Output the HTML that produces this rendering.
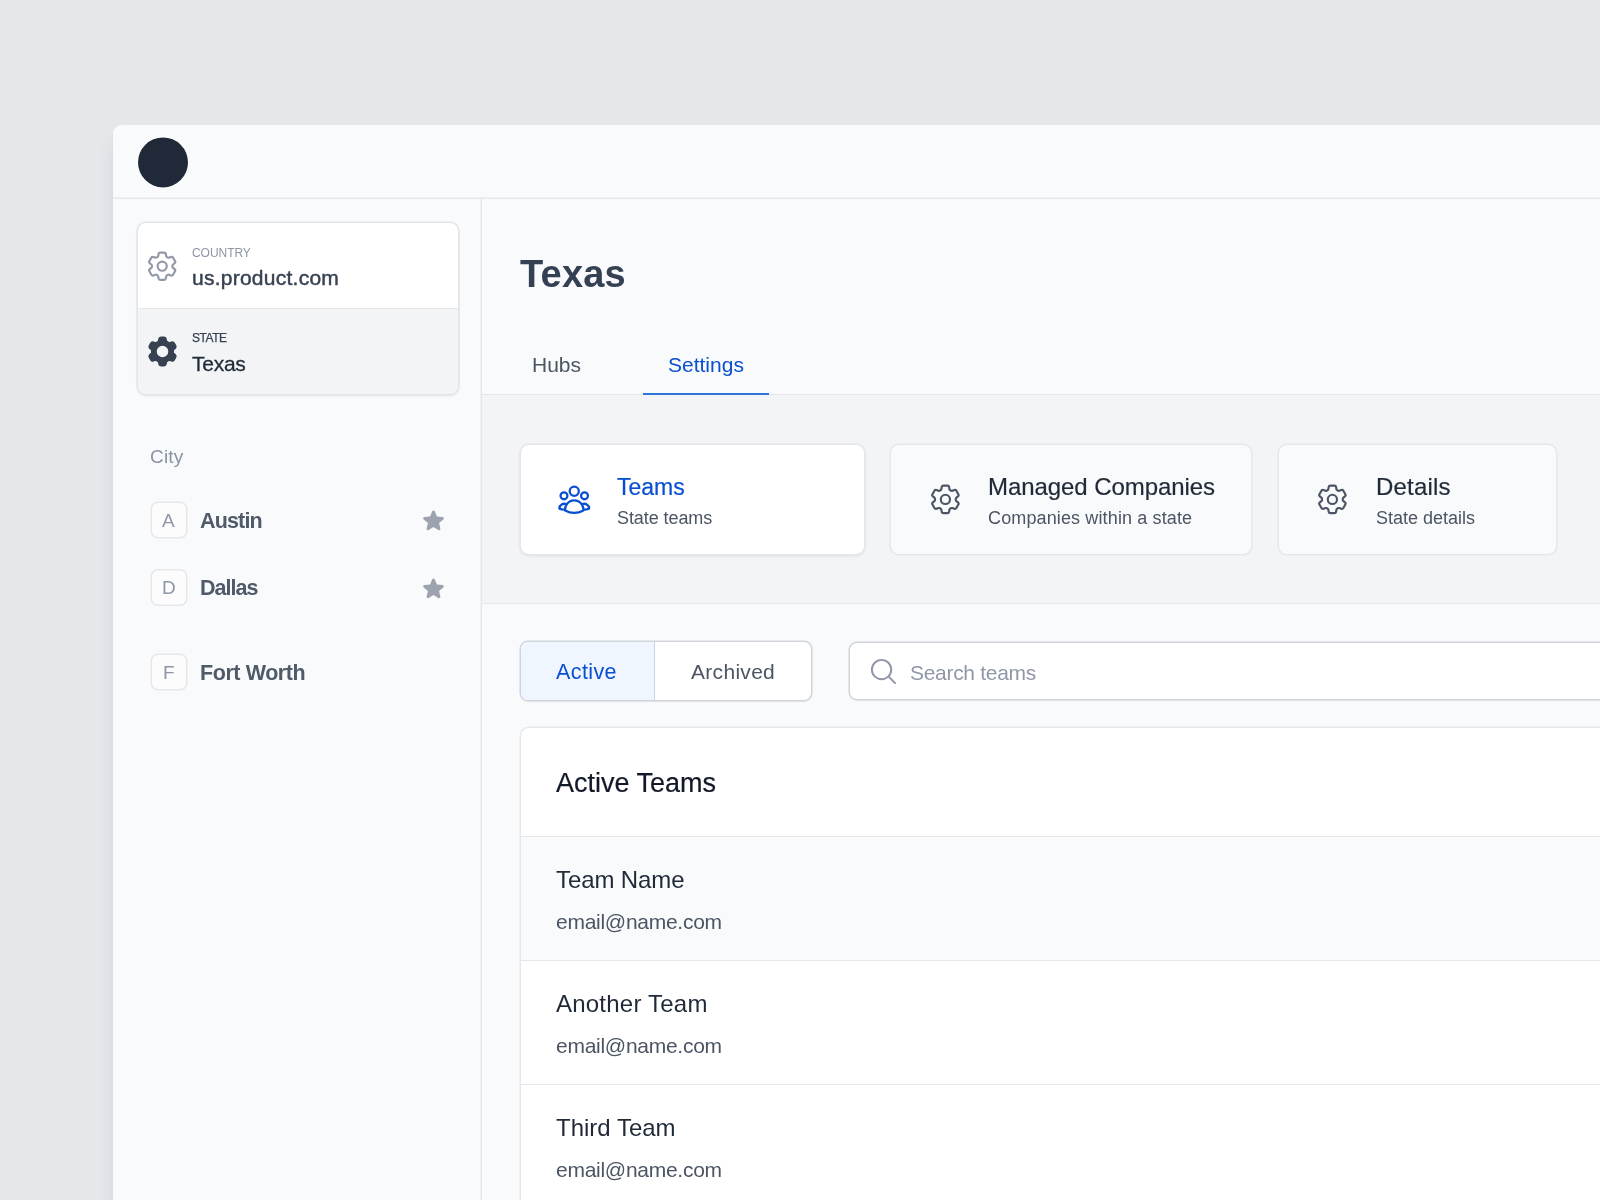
<!DOCTYPE html>
<html lang="en">
<head>
<meta charset="utf-8">
<title>Texas – Settings</title>
<style>
*{box-sizing:border-box;margin:0;padding:0}
html,body{width:1600px;height:1200px;overflow:hidden}
body{background:#e5e7eb;font-family:"Liberation Sans",Arial,sans-serif;position:relative;color:#1f2937}
.abs{position:absolute}
.t{will-change:transform;position:absolute;white-space:nowrap;line-height:1;transform-origin:0 50%}
#win{left:113px;top:125px;width:1500px;height:1100px;background:#f9fafb;border-radius:9px 0 0 0;box-shadow:0 15px 22px -4px rgba(17,24,39,.10),0 6px 9px -3px rgba(17,24,39,.05)}
#hdr{left:113px;top:197px;width:1487px;height:2px;background:linear-gradient(to bottom,rgba(229,231,235,.5) 0,rgba(229,231,235,.5) 1px,#e5e7eb 1px,#e5e7eb 2px)}
#logo{left:138px;top:137px;width:50px;height:50px;border-radius:50%;background:#1f2937;box-shadow:0 0 0 1px rgba(255,255,255,.85);transform:translateY(.4px)}
#sideline{left:480px;top:199px;width:2px;height:1001px;background:linear-gradient(to right,rgba(229,231,235,.5) 0,rgba(229,231,235,.5) 1px,#e5e7eb 1px,#e5e7eb 2px)}
#ctx{left:137px;top:222px;width:322px;height:173px;border-radius:9px;background:#fff;border:1px solid #e2e4e9;box-shadow:0 0 0 .5px #e2e4e9,0 1px 3px rgba(17,24,39,.08);overflow:hidden}
#ctx .lo{position:absolute;left:0;top:85px;width:100%;height:88px;background:#f3f4f6;border-top:1px solid #e5e7eb}
svg{position:absolute;overflow:visible}
.badge{position:absolute;width:36px;height:36px;border:1px solid #e5e7eb;border-radius:7px;background:#fcfcfd;box-shadow:0 0 0 .5px #e5e7eb}
#band{left:482px;top:394px;width:1118px;height:210px;background:#f3f4f6;border-top:1px solid #e5e7eb;border-bottom:1px solid #e5e7eb}
.card{position:absolute;top:444px;height:111px;border:1px solid #e5e7eb;border-radius:9px;background:#f9fafb;box-shadow:0 0 0 .5px #e5e7eb}
#c1{left:520px;width:345px;background:#fff;box-shadow:0 0 0 .5px #e5e7eb,0 1px 3px rgba(17,24,39,.10)}
#c2{left:890px;width:362px}
#c3{left:1278px;width:279px}
#seg{left:520px;top:641px;width:292px;height:60px;border:1px solid #d1d5db;border-radius:8px;background:#fff;overflow:hidden;box-shadow:0 0 0 .5px #d1d5db,0 1px 2px rgba(17,24,39,.05)}
#seg .on{position:absolute;left:0;top:0;width:134px;height:100%;background:#eff6ff;border-right:1px solid #d1d5db}
#search{left:849px;top:642px;width:800px;height:58px;border:1px solid #d1d5db;border-radius:8px;background:#fff;box-shadow:0 0 0 .5px #d1d5db,0 1px 2px rgba(17,24,39,.05)}
#tbl{left:520px;top:727px;width:1200px;height:600px;border:1px solid #e5e7eb;border-radius:9px 0 0 0;background:#fff;overflow:hidden;box-shadow:0 0 0 .5px #e5e7eb}
#tbl .r{position:absolute;left:0;width:100%;height:1px;background:#e5e7eb}
#tbl .alt{position:absolute;left:0;top:109px;width:100%;height:124px;background:#f9fafb}
</style>
</head>
<body>
<div id="win" class="abs"></div>
<div id="hdr" class="abs"></div>
<div id="logo" class="abs"></div>
<div id="sideline" class="abs"></div>

<!-- context switcher -->
<div id="ctx" class="abs"><div class="lo"></div></div>
<svg style="left:144.3px;top:247.7px" width="36.4" height="36.4" viewBox="0 0 24 24" fill="none" stroke="#9299a8" stroke-width="1.45" stroke-linecap="round" stroke-linejoin="round"><path d="M9.594 3.94c.09-.542.56-.94 1.11-.94h2.593c.55 0 1.02.398 1.11.94l.213 1.281c.063.374.313.686.645.87.074.04.147.083.22.127.325.196.72.257 1.075.124l1.217-.456a1.125 1.125 0 0 1 1.37.49l1.296 2.247a1.125 1.125 0 0 1-.26 1.431l-1.003.827c-.293.241-.438.613-.43.992a7.723 7.723 0 0 1 0 .255c-.008.378.137.75.43.991l1.004.827c.424.35.534.955.26 1.43l-1.298 2.247a1.125 1.125 0 0 1-1.369.491l-1.217-.456c-.355-.133-.75-.072-1.076.124a6.47 6.47 0 0 1-.22.128c-.331.183-.581.495-.644.869l-.213 1.281c-.09.543-.56.94-1.11.94h-2.594c-.55 0-1.019-.398-1.11-.94l-.213-1.281c-.062-.374-.312-.686-.644-.87a6.52 6.52 0 0 1-.22-.127c-.325-.196-.72-.257-1.076-.124l-1.217.456a1.125 1.125 0 0 1-1.369-.49l-1.297-2.247a1.125 1.125 0 0 1 .26-1.431l1.004-.827c.292-.24.437-.613.43-.991a6.932 6.932 0 0 1 0-.255c.007-.38-.138-.751-.43-.992l-1.004-.827a1.125 1.125 0 0 1-.26-1.43l1.297-2.247a1.125 1.125 0 0 1 1.37-.491l1.216.456c.356.133.751.072 1.076-.124.072-.044.146-.086.22-.128.332-.183.582-.495.644-.869l.214-1.28Z"/><path d="M15 12a3 3 0 1 1-6 0 3 3 0 0 1 6 0Z"/></svg>
<span class="t" style="left:192px;top:246.5px;font-size:12px;color:#8d96a4;letter-spacing:-.05px">COUNTRY</span>
<span class="t" id="usp" style="left:192px;top:267px;font-size:21px;color:#374151;letter-spacing:.25px;-webkit-text-stroke:.45px #374151">us.product.com</span>
<svg style="left:144px;top:332.5px" width="37" height="37" viewBox="0 0 24 24" fill="#374151"><path fill-rule="evenodd" clip-rule="evenodd" d="M11.078 2.25c-.917 0-1.699.663-1.85 1.567L9.05 4.889c-.02.12-.115.26-.297.348a7.493 7.493 0 0 0-.986.57c-.166.115-.334.126-.45.083L6.3 5.508a1.875 1.875 0 0 0-2.282.819l-.922 1.597a1.875 1.875 0 0 0 .432 2.385l.84.692c.095.078.17.229.154.43a7.598 7.598 0 0 0 0 1.139c.015.2-.059.352-.153.43l-.841.692a1.875 1.875 0 0 0-.432 2.385l.922 1.597a1.875 1.875 0 0 0 2.282.818l1.019-.382c.115-.043.283-.031.45.082.312.214.641.405.985.57.182.088.277.228.297.35l.178 1.071c.151.904.933 1.567 1.85 1.567h1.844c.916 0 1.699-.663 1.85-1.567l.178-1.072c.02-.12.114-.26.297-.349.344-.165.673-.356.985-.57.167-.114.335-.125.45-.082l1.02.382a1.875 1.875 0 0 0 2.28-.819l.923-1.597a1.875 1.875 0 0 0-.432-2.385l-.84-.692c-.095-.078-.17-.229-.154-.43a7.614 7.614 0 0 0 0-1.139c-.016-.2.059-.352.153-.43l.84-.692c.708-.582.891-1.59.433-2.385l-.922-1.597a1.875 1.875 0 0 0-2.282-.818l-1.02.382c-.114.043-.282.031-.449-.083a7.49 7.49 0 0 0-.985-.57c-.183-.087-.277-.227-.297-.348l-.179-1.072a1.875 1.875 0 0 0-1.85-1.567h-1.843ZM12 15.75a3.75 3.75 0 1 0 0-7.5 3.75 3.75 0 0 0 0 7.5Z"/></svg>
<span class="t" style="left:192px;top:332.4px;font-size:12px;color:#374151;letter-spacing:-.45px;-webkit-text-stroke:.25px #374151">STATE</span>
<span class="t" style="left:192px;top:353px;font-size:21px;color:#1f2937;letter-spacing:-.25px;-webkit-text-stroke:.3px #1f2937">Texas</span>

<!-- city list -->
<span class="t" style="left:150px;top:446.5px;font-size:19px;color:#8a93a2;letter-spacing:.2px">City</span>
<div class="badge" style="left:151px;top:502px"></div>
<span class="t" style="left:162.2px;top:511px;font-size:19px;color:#8e96a6">A</span>
<span class="t" style="left:200px;top:511px;font-size:21.5px;letter-spacing:-.85px;color:#505a69;font-weight:bold">Austin</span>
<svg style="left:420.5px;top:507.5px" width="25" height="25" viewBox="0 0 24 24" fill="#9ca3af"><path fill-rule="evenodd" clip-rule="evenodd" d="M10.788 3.21c.448-1.077 1.976-1.077 2.424 0l2.082 5.006 5.404.434c1.164.093 1.636 1.545.749 2.305l-4.117 3.527 1.257 5.273c.271 1.136-.964 2.033-1.96 1.425L12 18.354 7.373 21.18c-.996.608-2.231-.29-1.96-1.425l1.257-5.273-4.117-3.527c-.887-.76-.415-2.212.749-2.305l5.404-.434 2.082-5.005Z"/></svg>
<div class="badge" style="left:151px;top:569px;transform:translateY(.5px)"></div>
<span class="t" style="left:162px;top:578px;font-size:19px;color:#8e96a6">D</span>
<span class="t" style="left:200px;top:578.2px;font-size:21.5px;letter-spacing:-1px;color:#505a69;font-weight:bold">Dallas</span>
<svg style="left:420.5px;top:575.7px" width="25" height="25" viewBox="0 0 24 24" fill="#9ca3af"><path fill-rule="evenodd" clip-rule="evenodd" d="M10.788 3.21c.448-1.077 1.976-1.077 2.424 0l2.082 5.006 5.404.434c1.164.093 1.636 1.545.749 2.305l-4.117 3.527 1.257 5.273c.271 1.136-.964 2.033-1.96 1.425L12 18.354 7.373 21.18c-.996.608-2.231-.29-1.96-1.425l1.257-5.273-4.117-3.527c-.887-.76-.415-2.212.749-2.305l5.404-.434 2.082-5.005Z"/></svg>
<div class="badge" style="left:151px;top:654px"></div>
<span class="t" style="left:163px;top:663px;font-size:19px;color:#8e96a6">F</span>
<span class="t" style="left:200px;top:663.2px;font-size:21.5px;letter-spacing:-.42px;color:#505a69;font-weight:bold">Fort Worth</span>

<!-- main heading + tabs -->
<span class="t" style="left:520.4px;top:254.5px;font-size:38px;color:#344053;font-weight:bold;letter-spacing:.2px">Texas</span>
<span class="t" style="left:532px;top:354px;font-size:21px;color:#4b5563">Hubs</span>
<span class="t" style="left:668px;top:354px;font-size:21px;color:#0a4fd0">Settings</span>
<div id="band" class="abs"></div>
<div class="abs" style="left:643px;top:393px;width:126px;height:2px;background:#2e74d8"></div>

<!-- settings cards -->
<div id="c1" class="card"></div>
<svg style="left:555.7px;top:481.1px" width="36.5" height="36.5" viewBox="0 0 24 24" fill="none" stroke="#0a4fd0" stroke-width="1.5" stroke-linecap="round" stroke-linejoin="round"><path d="M18 18.72a9.094 9.094 0 0 0 3.741-.479 3 3 0 0 0-4.682-2.72m.94 3.198.001.031c0 .225-.012.447-.037.666A11.944 11.944 0 0 1 12 21c-2.17 0-4.207-.576-5.963-1.584A6.062 6.062 0 0 1 6 18.719m12 0a5.971 5.971 0 0 0-.941-3.197m0 0A5.995 5.995 0 0 0 12 12.75a5.995 5.995 0 0 0-5.058 2.772m0 0a3 3 0 0 0-4.681 2.72 8.986 8.986 0 0 0 3.74.477m.94-3.197a5.971 5.971 0 0 0-.94 3.197M15 6.75a3 3 0 1 1-6 0 3 3 0 0 1 6 0Zm6 3a2.25 2.25 0 1 1-4.500 0 2.25 2.25 0 0 1 4.500 0Zm-13.500 0a2.25 2.25 0 1 1-4.500 0 2.25 2.25 0 0 1 4.500 0Z"/></svg>
<span class="t" style="left:617.2px;top:476.2px;font-size:23px;color:#0a4fd0;-webkit-text-stroke:.2px #0a4fd0">Teams</span>
<span class="t" style="left:617px;top:509.2px;font-size:18px;color:#4b5563;letter-spacing:-.08px">State teams</span>

<div id="c2" class="card"></div>
<svg style="left:926.6px;top:480.7px" width="36.8" height="36.8" viewBox="0 0 24 24" fill="none" stroke="#4b5563" stroke-width="1.4" stroke-linecap="round" stroke-linejoin="round"><path d="M9.594 3.94c.09-.542.56-.94 1.11-.94h2.593c.55 0 1.02.398 1.11.94l.213 1.281c.063.374.313.686.645.87.074.04.147.083.22.127.325.196.72.257 1.075.124l1.217-.456a1.125 1.125 0 0 1 1.37.49l1.296 2.247a1.125 1.125 0 0 1-.26 1.431l-1.003.827c-.293.241-.438.613-.43.992a7.723 7.723 0 0 1 0 .255c-.008.378.137.75.43.991l1.004.827c.424.35.534.955.26 1.43l-1.298 2.247a1.125 1.125 0 0 1-1.369.491l-1.217-.456c-.355-.133-.75-.072-1.076.124a6.47 6.47 0 0 1-.22.128c-.331.183-.581.495-.644.869l-.213 1.281c-.09.543-.56.94-1.11.94h-2.594c-.55 0-1.019-.398-1.11-.94l-.213-1.281c-.062-.374-.312-.686-.644-.87a6.52 6.52 0 0 1-.22-.127c-.325-.196-.72-.257-1.076-.124l-1.217.456a1.125 1.125 0 0 1-1.369-.49l-1.297-2.247a1.125 1.125 0 0 1 .26-1.431l1.004-.827c.292-.24.437-.613.43-.991a6.932 6.932 0 0 1 0-.255c.007-.38-.138-.751-.43-.992l-1.004-.827a1.125 1.125 0 0 1-.26-1.43l1.297-2.247a1.125 1.125 0 0 1 1.37-.491l1.216.456c.356.133.751.072 1.076-.124.072-.044.146-.086.22-.128.332-.183.582-.495.644-.869l.214-1.28Z"/><path d="M15 12a3 3 0 1 1-6 0 3 3 0 0 1 6 0Z"/></svg>
<span class="t" style="left:988px;top:475.3px;font-size:24px;color:#1f2937;letter-spacing:-.07px;-webkit-text-stroke:.2px #1f2937">Managed Companies</span>
<span class="t" style="left:988px;top:509.3px;font-size:18px;color:#4b5563;letter-spacing:.13px">Companies within a state</span>

<div id="c3" class="card"></div>
<svg style="left:1313.9px;top:480.7px" width="36.8" height="36.8" viewBox="0 0 24 24" fill="none" stroke="#4b5563" stroke-width="1.4" stroke-linecap="round" stroke-linejoin="round"><path d="M9.594 3.94c.09-.542.56-.94 1.11-.94h2.593c.55 0 1.02.398 1.11.94l.213 1.281c.063.374.313.686.645.87.074.04.147.083.22.127.325.196.72.257 1.075.124l1.217-.456a1.125 1.125 0 0 1 1.37.49l1.296 2.247a1.125 1.125 0 0 1-.26 1.431l-1.003.827c-.293.241-.438.613-.43.992a7.723 7.723 0 0 1 0 .255c-.008.378.137.75.43.991l1.004.827c.424.35.534.955.26 1.43l-1.298 2.247a1.125 1.125 0 0 1-1.369.491l-1.217-.456c-.355-.133-.75-.072-1.076.124a6.47 6.47 0 0 1-.22.128c-.331.183-.581.495-.644.869l-.213 1.281c-.09.543-.56.94-1.11.94h-2.594c-.55 0-1.019-.398-1.11-.94l-.213-1.281c-.062-.374-.312-.686-.644-.87a6.52 6.52 0 0 1-.22-.127c-.325-.196-.72-.257-1.076-.124l-1.217.456a1.125 1.125 0 0 1-1.369-.49l-1.297-2.247a1.125 1.125 0 0 1 .26-1.431l1.004-.827c.292-.24.437-.613.43-.991a6.932 6.932 0 0 1 0-.255c.007-.38-.138-.751-.43-.992l-1.004-.827a1.125 1.125 0 0 1-.26-1.43l1.297-2.247a1.125 1.125 0 0 1 1.37-.491l1.216.456c.356.133.751.072 1.076-.124.072-.044.146-.086.22-.128.332-.183.582-.495.644-.869l.214-1.28Z"/><path d="M15 12a3 3 0 1 1-6 0 3 3 0 0 1 6 0Z"/></svg>
<span class="t" style="left:1375.5px;top:475.3px;font-size:24px;color:#1f2937;letter-spacing:.2px;-webkit-text-stroke:.2px #1f2937">Details</span>
<span class="t" style="left:1375.5px;top:509.3px;font-size:18px;color:#4b5563">State details</span>

<!-- filter row -->
<div id="seg" class="abs"><div class="on"></div></div>
<span class="t" style="left:556px;top:662px;font-size:21.5px;color:#0a4fd0;letter-spacing:.4px">Active</span>
<span class="t" style="left:691px;top:661px;font-size:21px;color:#4b5563;letter-spacing:.3px">Archived</span>
<div id="search" class="abs"></div>
<svg style="left:867.6px;top:656.2px" width="31" height="31" viewBox="0 0 24 24" fill="none" stroke="#8e96a6" stroke-width="1.5" stroke-linecap="round" stroke-linejoin="round"><path d="m21 21-5.197-5.197m0 0A7.500 7.500 0 1 0 5.196 5.196a7.500 7.500 0 0 0 10.607 10.607Z"/></svg>
<span class="t" style="left:910px;top:662px;font-size:21px;color:#8f97a7;letter-spacing:-.3px">Search teams</span>

<!-- table -->
<div id="tbl" class="abs">
  <div class="alt"></div>
  <div class="r" style="top:108px"></div>
  <div class="r" style="top:232px"></div>
  <div class="r" style="top:356px"></div>
</div>
<span class="t" style="left:556px;top:770px;font-size:27px;color:#111827;-webkit-text-stroke:.2px #111827">Active Teams</span>
<span class="t" style="left:556px;top:868px;font-size:24px;color:#1f2937;letter-spacing:-.1px">Team Name</span>
<span class="t" style="left:556px;top:911px;font-size:21px;color:#4b5563;letter-spacing:-.27px">email@name.com</span>
<span class="t" style="left:556px;top:992px;font-size:24px;color:#1f2937;letter-spacing:.22px">Another Team</span>
<span class="t" style="left:556px;top:1035px;font-size:21px;color:#4b5563;letter-spacing:-.27px">email@name.com</span>
<span class="t" style="left:556px;top:1116px;font-size:24px;color:#1f2937">Third Team</span>
<span class="t" style="left:556px;top:1159px;font-size:21px;color:#4b5563;letter-spacing:-.27px">email@name.com</span>
</body>
</html>
